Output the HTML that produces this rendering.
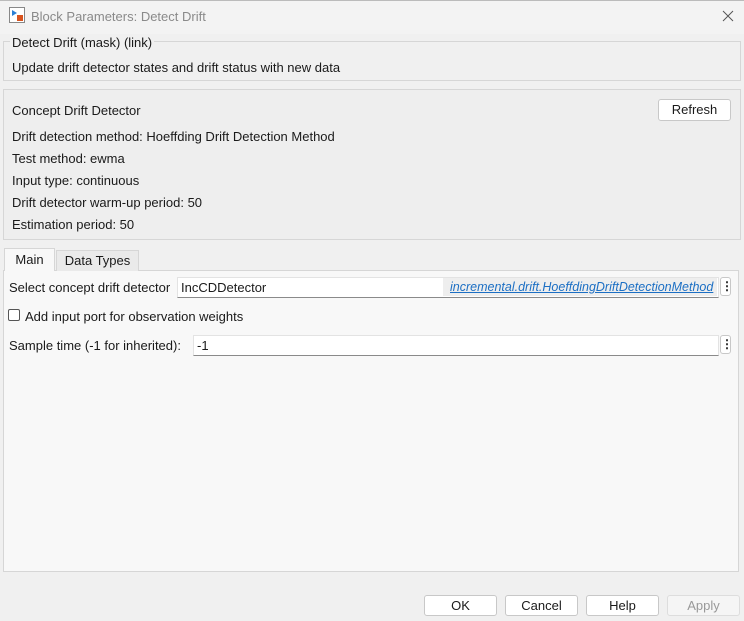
<!DOCTYPE html>
<html><head><style>
body{margin:0;width:744px;height:621px;background:#f0f0f0;font-family:"Liberation Sans",sans-serif;font-size:13px;color:#1a1a1a;position:relative;overflow:hidden}
.a{position:absolute;white-space:nowrap}
.box{position:absolute;border:1px solid #d6d6d6;box-sizing:border-box}
.btn{position:absolute;background:#fff;border:1px solid #c8c8c8;border-radius:3px;box-sizing:border-box;text-align:center;line-height:19px;font-size:13px}
.inp{position:absolute;background:#fff;border:1px solid #e3e3e3;border-bottom:1px solid #8a8a8a;box-sizing:border-box;padding-left:3px;line-height:19px}
.dots{position:absolute;width:11px;height:19px;border:1px solid #c8c8c8;border-radius:3px;background:#fff;box-sizing:border-box;text-align:center;font-weight:bold;line-height:17px;font-size:12px}
</style></head><body>
<div class="a" style="left:0;top:0;width:744px;height:33px;background:#f3f3f3;border-top:1px solid #bbb"></div>
<svg class="a" style="left:9px;top:7px" width="16" height="16"><rect x="0.5" y="0.5" width="15" height="15" fill="#fff" stroke="#888"/><path d="M3 3 L8 6 L3 9Z" fill="#2a7fd4"/><rect x="8" y="8" width="6" height="6" fill="#d9531e"/></svg>
<div class="a" style="left:31px;top:9px;color:#8a8a8a">Block Parameters: Detect Drift</div>
<svg class="a" style="left:722px;top:10px" width="12" height="12"><path d="M1 1L11 11M11 1L1 11" stroke="#555" stroke-width="1"/></svg>
<div class="box" style="left:3px;top:41px;width:738px;height:40px"></div>
<div class="a" style="left:10px;top:35px;background:#f0f0f0;padding:0 2px">Detect Drift (mask) (link)</div>
<div class="a" style="left:12px;top:60px">Update drift detector states and drift status with new data</div>
<div class="box" style="left:3px;top:89px;width:738px;height:151px;background:#eeeeee"></div>
<div class="a" style="left:12px;top:103px">Concept Drift Detector</div>
<div class="btn" style="left:658px;top:99px;width:73px;height:22px;line-height:20px">Refresh</div>
<div class="a" style="left:12px;top:129px">Drift detection method: Hoeffding Drift Detection Method</div>
<div class="a" style="left:12px;top:151px">Test method: ewma</div>
<div class="a" style="left:12px;top:173px">Input type: continuous</div>
<div class="a" style="left:12px;top:195px">Drift detector warm-up period: 50</div>
<div class="a" style="left:12px;top:217px">Estimation period: 50</div>
<div class="box" style="left:3px;top:270px;width:736px;height:302px;background:#f8f8f8"></div>
<div class="a" style="left:4px;top:248px;width:51px;height:23px;background:#f8f8f8;border:1px solid #d6d6d6;border-bottom:none;box-sizing:border-box;text-align:center;line-height:22px">Main</div>
<div class="a" style="left:56px;top:250px;width:83px;height:21px;background:#eaeaea;border:1px solid #d6d6d6;border-bottom:none;box-sizing:border-box;text-align:center;line-height:20px">Data Types</div>
<div class="a" style="left:9px;top:280px">Select concept drift detector</div>
<div class="inp" style="left:177px;top:277px;width:542px;height:21px">IncCDDetector</div>
<div class="a" style="left:443px;top:278px;width:274px;height:18px;background:#eeeeee;color:#1c6fc4;font-style:italic;text-decoration:underline;line-height:18px;padding-left:7px;box-sizing:border-box;font-size:12.5px">incremental.drift.HoeffdingDriftDetectionMethod</div>
<div class="dots" style="left:720px;top:277px">⋮</div>
<div class="a" style="left:8px;top:309px;width:12px;height:12px;border:1px solid #555;border-radius:2px;background:#fff;box-sizing:border-box"></div>
<div class="a" style="left:25px;top:309px">Add input port for observation weights</div>
<div class="a" style="left:9px;top:338px">Sample time (-1 for inherited):</div>
<div class="inp" style="left:193px;top:335px;width:526px;height:21px">-1</div>
<div class="dots" style="left:720px;top:335px">⋮</div>
<div class="btn" style="left:424px;top:595px;width:73px;height:21px">OK</div>
<div class="btn" style="left:505px;top:595px;width:73px;height:21px">Cancel</div>
<div class="btn" style="left:586px;top:595px;width:73px;height:21px">Help</div>
<div class="btn" style="left:667px;top:595px;width:73px;height:21px;background:#f5f5f5;border-color:#ddd;color:#999">Apply</div>
</body></html>
